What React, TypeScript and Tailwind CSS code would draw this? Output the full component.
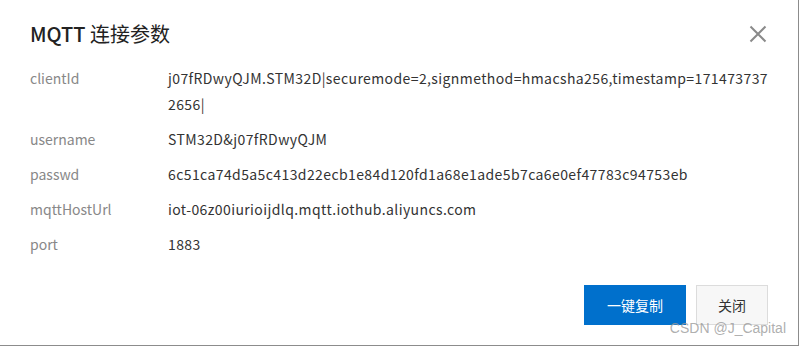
import React from 'react';

const params: { label: string; value: string }[] = [
  {
    label: 'clientId',
    value:
      'j07fRDwyQJM.STM32D|securemode=2,signmethod=hmacsha256,timestamp=1714737372656|',
  },
  { label: 'username', value: 'STM32D&j07fRDwyQJM' },
  { label: 'passwd', value: '6c51ca74d5a5c413d22ecb1e84d120fd1a68e1ade5b7ca6e0ef47783c94753eb' },
  { label: 'mqttHostUrl', value: 'iot-06z00iurioijdlq.mqtt.iothub.aliyuncs.com' },
  { label: 'port', value: '1883' },
];

const App: React.FC = () => {
  return (
    <div
      className="w-[800px] h-[347px] bg-white"
      style={{ fontFamily: '"Noto Sans CJK SC", "Noto Sans", sans-serif' }}
    >
      <div className="relative w-[799px] h-[346px] border-r border-b border-[#8c8c8c] flex flex-col">
        <div className="flex items-center justify-between pl-[30px] pr-[31px] pt-[19px] h-[48px]">
          <h2 className="text-[20px] leading-[28px] text-[#222]">
            <span className="font-medium">MQTT</span> 连接参数
          </h2>
          <button className="w-[18px] h-[18px] text-[#8a8a8a]">
            <svg viewBox="0 0 18 18" width="18" height="18" fill="none" stroke="currentColor" strokeWidth="2">
              <path d="M1.5 1.5 L16.5 16.5 M16.5 1.5 L1.5 16.5" />
            </svg>
          </button>
        </div>

        <div className="flex flex-col gap-[9px] pl-[30px] pt-[17px]">
          {params.map((p) => (
            <div key={p.label} className="flex text-[14px] leading-[26px]">
              <div className="w-[138px] shrink-0 text-[#888]">{p.label}</div>
              <div className="w-[604px] text-[#333] tracking-[0.4px] break-all">{p.value}</div>
            </div>
          ))}
        </div>

        <div className="mt-auto flex justify-end gap-[10px] pr-[30px] pb-[20px]">
          <button className="w-[102px] h-[40px] bg-[#0070cc] text-white text-[14px]">一键复制</button>
          <button className="w-[72px] h-[40px] bg-[#f7f7f7] border border-[#dcdcdc] text-[#333] text-[14px]">
            关闭
          </button>
        </div>

        <div
          className="absolute right-[12px] bottom-[9px] text-[14px] leading-[16px] text-[#9a9a9a]/80"
          style={{ fontFamily: '"Liberation Sans", Arial, sans-serif' }}
        >
          CSDN @J_Capital
        </div>
      </div>
    </div>
  );
};

export default App;
